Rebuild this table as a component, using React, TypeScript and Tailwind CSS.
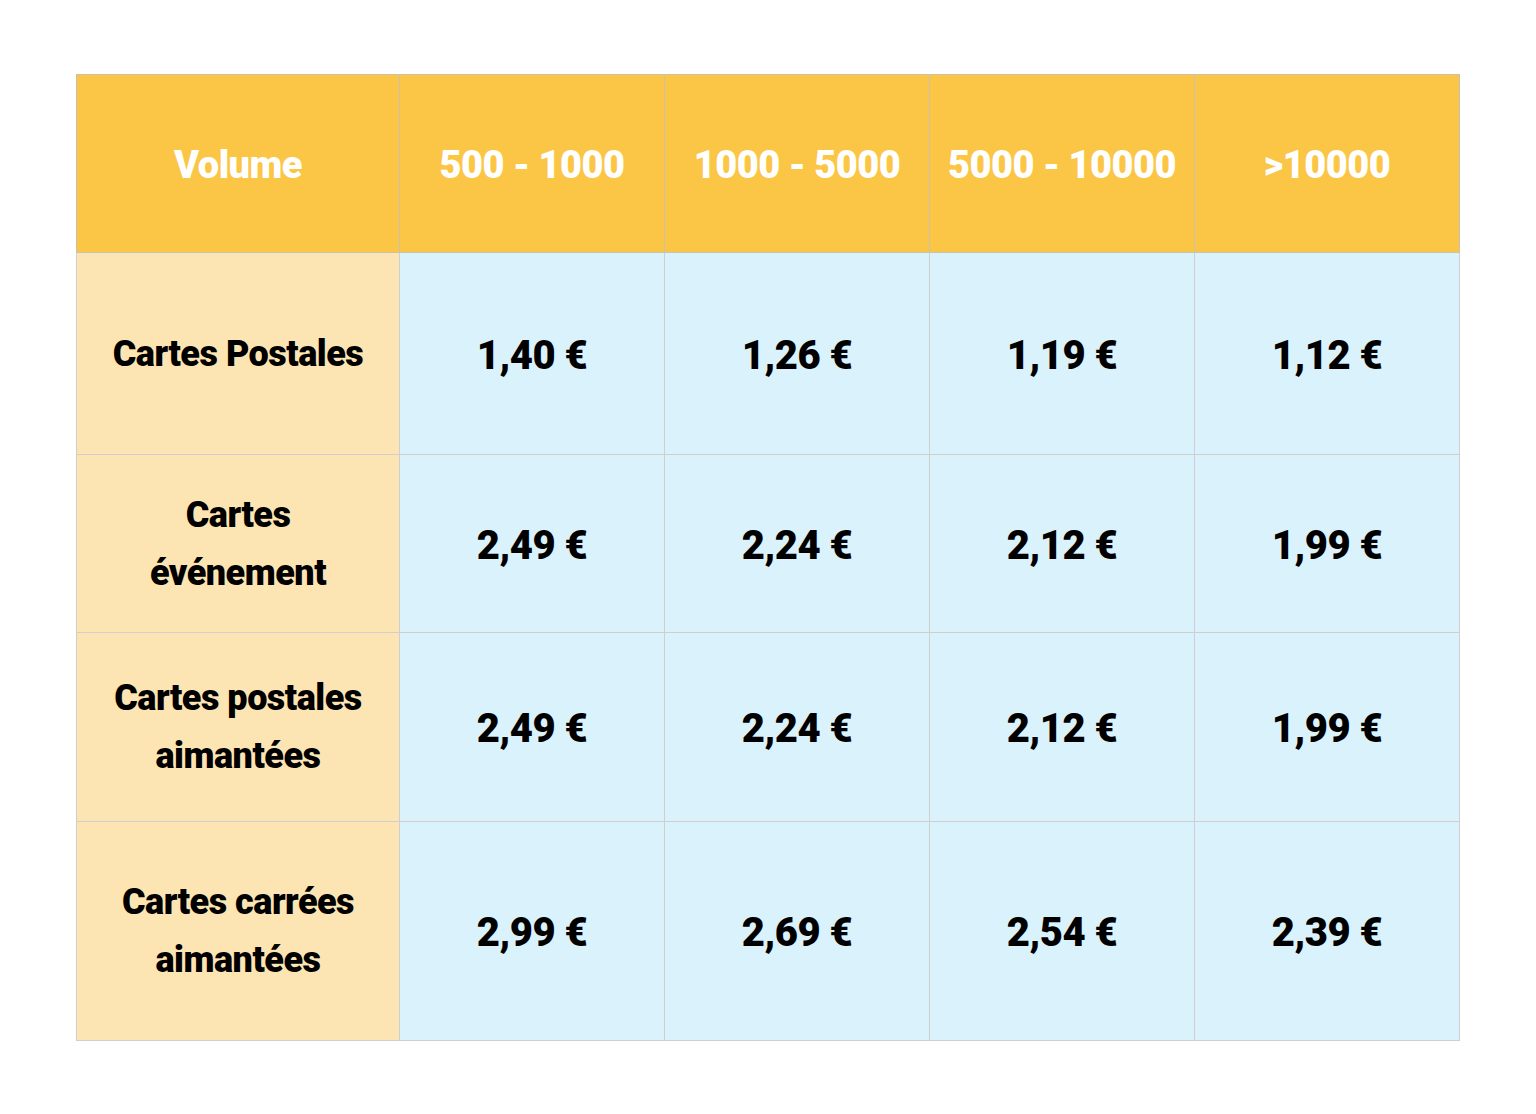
const HEADERS = ["500 - 1000", "1000 - 5000", "5000 - 10000", ">10000"];

const ROWS: { label: string[]; prices: string[]; h: string }[] = [
  { label: ["Cartes Postales"], prices: ["1,40 €", "1,26 €", "1,19 €", "1,12 €"], h: "h-[202px]" },
  { label: ["Cartes", "événement"], prices: ["2,49 €", "2,24 €", "2,12 €", "1,99 €"], h: "h-[178px]" },
  { label: ["Cartes postales", "aimantées"], prices: ["2,49 €", "2,24 €", "2,12 €", "1,99 €"], h: "h-[189px]" },
  { label: ["Cartes carrées", "aimantées"], prices: ["2,99 €", "2,69 €", "2,54 €", "2,39 €"], h: "h-[219px]" },
];

export default function App() {
  return (
    <div className="min-h-[1114px] w-[1536px] bg-white pt-[74px] pl-[76px] font-['Roboto',sans-serif]">
      <table className="border-collapse table-fixed w-[1384px]">
        <colgroup>
          <col className="w-[323px]" />
          <col className="w-[265px]" />
          <col className="w-[265px]" />
          <col className="w-[265px]" />
          <col className="w-[265px]" />
        </colgroup>
        <thead>
          <tr className="h-[178px] bg-[#fbc645]">
            <th className="border border-[#c9c2b0] pt-1 text-white text-[38px] font-black tracking-[-0.5px]">
              Volume
            </th>
            {HEADERS.map((h) => (
              <th
                key={h}
                className="border border-[#c9c2b0] pt-1 text-white text-[38px] font-black tracking-[-0.5px] whitespace-nowrap"
              >
                {h}
              </th>
            ))}
          </tr>
        </thead>
        <tbody>
          {ROWS.map((row, i) => (
            <tr key={i} className={row.h}>
              <td className="border border-[#cfcfcf] bg-[#fde5b3] text-center text-black text-[36px] font-black leading-[58px] tracking-[-0.5px]">
                {row.label.map((l) => (
                  <div key={l}>{l}</div>
                ))}
              </td>
              {row.prices.map((p, j) => (
                <td
                  key={j}
                  className="border border-[#cfcfcf] bg-[#daf2fc] pt-1 text-center text-black text-[40px] font-black tracking-[-0.5px]"
                >
                  {p}
                </td>
              ))}
            </tr>
          ))}
        </tbody>
      </table>
    </div>
  );
}
